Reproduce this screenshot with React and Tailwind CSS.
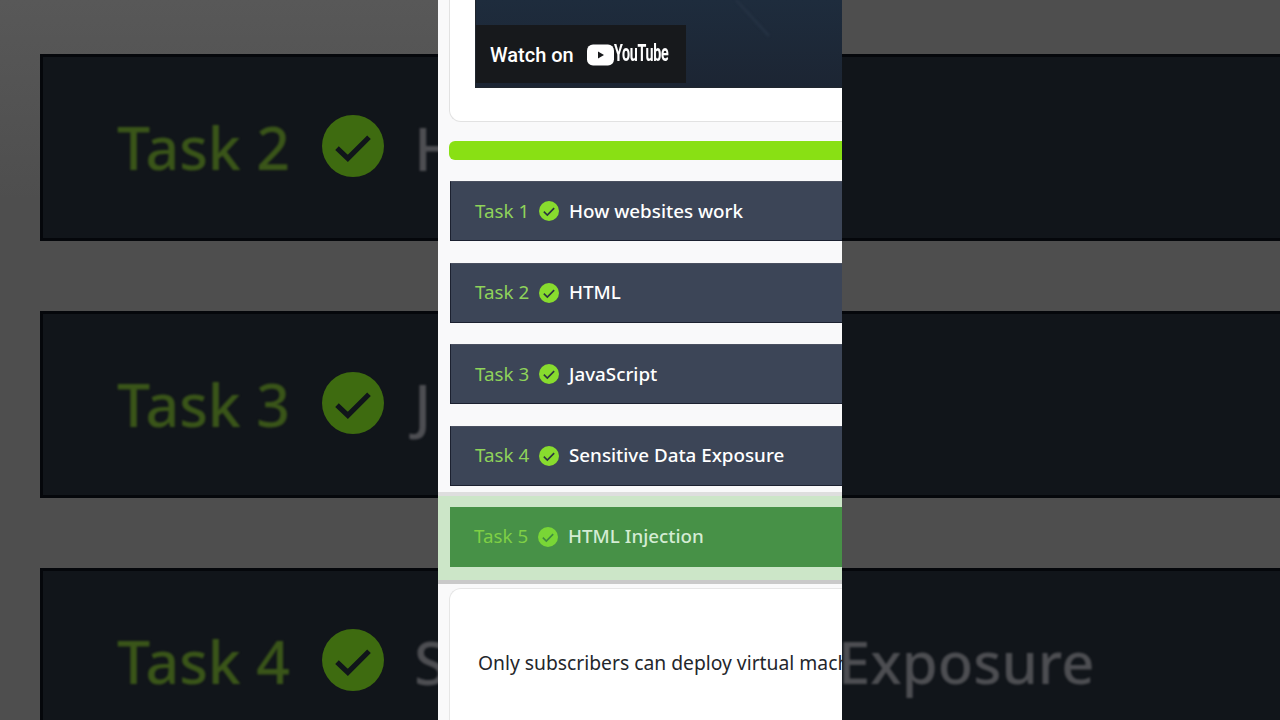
const font = "font-['Noto_Sans',sans-serif]";

const tasks = [
  { id: 1, title: 'How websites work' },
  { id: 2, title: 'HTML' },
  { id: 3, title: 'JavaScript' },
  { id: 4, title: 'Sensitive Data Exposure' },
];

const CheckBadge = ({ className, fill, tick }) => (
  <svg viewBox="0 0 24 24" className={className} aria-hidden="true">
    <circle cx="12" cy="12" r="12" fill={fill} />
    <path d="M5.8 12.8 10 16.8 18.2 8.6" fill="none" stroke={tick} strokeWidth="2" />
  </svg>
);

const TaskRow = ({ id, title }) => (
  <div className="flex h-[60px] w-[420px] items-center border border-[#1c2130] border-t-[#4a5060] bg-[#3c4557] pl-6 text-[18.8px]">
    <span className="w-[55px] whitespace-nowrap text-[#8fd35a]">Task {id}</span>
    <CheckBadge className="ml-[9px] h-5 w-5 shrink-0" fill="#88dc2e" tick="#2b3540" />
    <span className="ml-[10px] whitespace-nowrap font-medium text-white">{title}</span>
  </div>
);

const BlurRow = ({ id, lead }) => (
  <div className="flex h-[187px] w-[440px] shrink-0 items-center border-y-[3px] border-l-[3px] border-[#05070b] bg-[#11151a] pl-[74px]">
    <span className="w-[172px] whitespace-nowrap text-[59px] font-medium text-[#3a5519] blur-[1px]">Task {id}</span>
    <CheckBadge className="-mt-1 ml-[33px] h-[62px] w-[62px] shrink-0 blur-[0.6px]" fill="#3e6b10" tick="#10151a" />
    <span className="ml-[30px] whitespace-nowrap text-[60px] font-medium text-[#4d4e52] blur-[1px]">{lead}</span>
  </div>
);

const App = () => {
  return (
    <div className={`flex h-[720px] w-[1280px] overflow-hidden bg-[#4e4e4e] ${font}`}>
      <aside className="flex w-[438px] shrink-0 flex-col gap-[70px] overflow-hidden bg-[linear-gradient(#585858,#4e4e4e_200px)] pl-10 pt-[54px]">
        <BlurRow id={2} lead="H" />
        <BlurRow id={3} lead="J" />
        <BlurRow id={4} lead="S" />
      </aside>

      <main className="w-[404px] shrink-0 overflow-hidden bg-[#f9f9fa]">
        <div className="ml-[11px] h-[122px] w-[420px] rounded-bl-xl border-b border-l border-[#e2e2e2] bg-white pl-[25px]">
          <div className="relative flex h-[88px] items-end border-b border-l border-[#20262e] bg-[linear-gradient(#1e2c3d,#1c2533)] pb-1">
            <svg className="absolute left-[255px] top-0 h-[40px] w-[50px] blur-[1px]" viewBox="0 0 50 40" aria-hidden="true">
              <path d="M5 0 38 36" stroke="#243142" strokeWidth="3" />
            </svg>
            <div className="relative flex h-[58px] w-[210px] items-center bg-[#17191c] pl-[14px] font-['Roboto',sans-serif] text-white">
              <span className="mt-[1px] text-[20px] font-medium whitespace-nowrap">Watch on</span>
              <svg className="ml-[13px] mt-[1px] h-[22px] w-[27px] shrink-0" viewBox="0 0 27 22" aria-hidden="true">
                <rect width="27" height="21" y="0.5" rx="6" fill="#fff" />
                <path d="M11 7.5 17 11 11 14.5Z" fill="#17191c" />
              </svg>
              <span className="mt-[1px] w-[55px] origin-left scale-x-[0.62] text-[23px] font-bold tracking-[-0.5px] whitespace-nowrap">YouTube</span>
            </div>
          </div>
        </div>

        <div className="ml-[11px] mt-[19px] h-[19px] w-[420px] rounded-l-md bg-[#89e014]" />

        <div className="ml-3 mt-[21px] flex flex-col gap-[21.5px]">
          {tasks.map((task) => (
            <TaskRow key={task.id} {...task} />
          ))}
        </div>

        <div className="mt-[6px] h-[92px] border-y-4 border-t-[#dedede] border-b-[#c9c9c9] bg-[#cce6c8] pl-3 pt-[11px]">
          <div className="flex h-[60px] w-[420px] items-center bg-[#479147] pl-6 text-[18.8px]">
            <span className="w-[55px] whitespace-nowrap text-[#7fcf45]">Task 5</span>
            <CheckBadge className="ml-[9px] h-5 w-5 shrink-0" fill="#79d636" tick="#3f8a40" />
            <span className="ml-[10px] whitespace-nowrap font-medium text-[#d4ecd4]">HTML Injection</span>
          </div>
        </div>

        <div className="ml-[11px] mt-1 flex h-[150px] w-[420px] rounded-tl-xl border-l border-t border-[#e6e6e6] bg-white pl-[28px] pt-[60px] text-[19.3px] whitespace-nowrap text-[#24262b]">
          Only subscribers can deploy virtual machines
        </div>
      </main>

      <aside className="flex flex-1 flex-col gap-[70px] overflow-hidden pt-[54px]">
        <div className="h-[187px] shrink-0 border-y-[3px] border-[#05070b] bg-[#11151a]" />
        <div className="h-[187px] shrink-0 border-y-[3px] border-[#05070b] bg-[#11151a]" />
        <div className="flex h-[187px] shrink-0 items-center border-y-[3px] border-[#05070b] bg-[#11151a] text-[58px] font-medium text-[#4d4e52]">
          <span className="-ml-1 blur-[1px]">Exposure</span>
        </div>
      </aside>
    </div>
  );
};

export default App;
